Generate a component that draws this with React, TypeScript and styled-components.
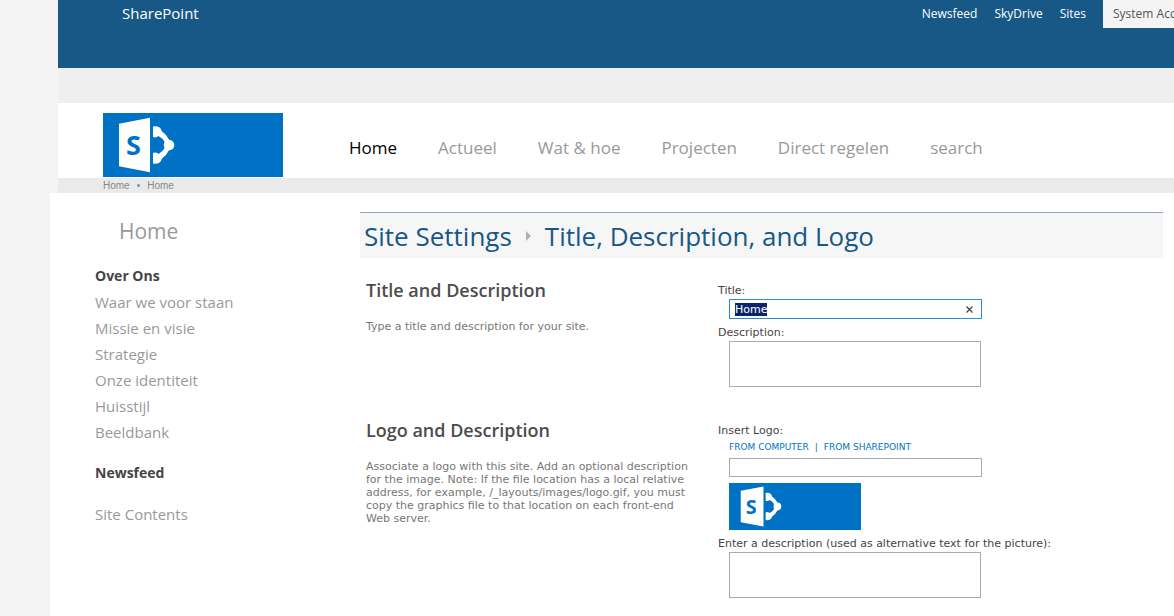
import React, { useEffect, useRef } from "react";
import styled, { createGlobalStyle } from "styled-components";

const human = `"Open Sans", "Noto Sans", sans-serif`;
const verdana = `Verdana, "DejaVu Sans", sans-serif`;

const GlobalStyle = createGlobalStyle`
  * { box-sizing: border-box; }
  body { margin: 0; background: #f4f4f4; font-family: ${human}; color: #999; overflow-x: hidden; }
  h1, h2, p, ul { margin: 0; padding: 0; font-weight: 400; }
  ul { list-style: none; }
  a { color: inherit; text-decoration: none; }
`;

const Header = styled.header`
  margin-left: 58px;
  background: #fff;
`;

const SuiteBar = styled.div`
  display: flex;
  justify-content: space-between;
  align-items: flex-start;
  height: 68px;
  padding-left: 64px;
  background: #185887;
  color: #fff;
`;

const Brand = styled.a`
  font-size: 15px;
  line-height: 26px;
`;

const SuiteNav = styled.nav`
  display: flex;
  gap: 17px;
  font-size: 12px;
  line-height: 28px;
`;

const Account = styled.button`
  width: 71px;
  padding: 0 0 0 10px;
  border: 0;
  background: #f4f4f4;
  color: #555;
  font: inherit;
  text-align: left;
  white-space: nowrap;
  overflow: hidden;
`;

const Ribbon = styled.div`
  height: 35px;
  background: #efefef;
`;

const TopRow = styled.div`
  display: flex;
  gap: 66px;
  height: 75px;
  padding: 10px 0 0 45px;
`;

const MainNav = styled.nav`
  display: flex;
  gap: 41px;
  padding-top: 22px;
  font-size: 17px;
  line-height: 26px;
`;

const NavLink = styled.a<{ $current?: boolean }>`
  color: ${(p) => (p.$current ? "#000" : "#999")};
  white-space: nowrap;
`;

const Crumbs = styled.nav`
  display: flex;
  gap: 7px;
  height: 15px;
  padding-left: 45px;
  background: #eaeaea;
  color: #888;
  font: 10px/15px "Liberation Sans", Arial, sans-serif;
`;

const Body = styled.div`
  display: flex;
  min-height: calc(100vh - 193px);
  margin-left: 50px;
  padding-right: 11px;
  background: #fff;
`;

const Side = styled.aside`
  flex: 0 0 310px;
  padding: 24px 0 0 45px;
`;

const SideTitle = styled.h2`
  padding-left: 24px;
  font-size: 21px;
  line-height: 28px;
`;

const SideList = styled.ul`
  margin-top: 18px;
  line-height: 26px;
`;

const SideItem = styled.li<{ $head?: boolean; $gap?: boolean }>`
  margin-top: ${(p) => (p.$gap ? 15 : 0)}px;
  color: ${(p) => (p.$head ? "#444" : "#999")};
  font-size: ${(p) => (p.$head ? 14 : 15)}px;
  font-weight: ${(p) => (p.$head ? 700 : 400)};
`;

const Main = styled.main`
  flex: 1;
  min-width: 0;
  padding-top: 19px;
`;

const PageTitle = styled.h1`
  display: flex;
  align-items: center;
  gap: 14px;
  height: 46px;
  padding-left: 4px;
  border-top: 1px solid #91aacb;
  background: #f6f6f6;
  color: #185887;
  font-size: 26px;
  white-space: nowrap;
`;

const Section = styled.section`
  display: grid;
  grid-template-columns: 352px 1fr;
  min-height: 140px;
  padding: 18px 0 0 6px;
`;

const SectionTitle = styled.h2`
  color: #4c4c4c;
  font-size: 18px;
  font-weight: 600;
  line-height: 28px;
`;

const Help = styled.p`
  max-width: 326px;
  margin-top: 16px;
  color: #777;
  font: 11px/13px ${verdana};
`;

const Fields = styled.div`
  display: flex;
  flex-direction: column;
  align-items: flex-start;
  padding-top: 8px;
  color: #444;
  font: 11px/14px ${verdana};
`;

const Control = styled.div<{ $tight?: boolean }>`
  position: relative;
  width: 253px;
  margin: 1px 0 ${(p) => (p.$tight ? 5 : 7)}px 11px;
`;

const TextBox = styled.input<{ $short?: boolean }>`
  display: block;
  width: 100%;
  height: ${(p) => (p.$short ? 19 : 20)}px;
  padding: 0 5px;
  border: 1px solid #ababab;
  outline: none;
  color: #444;
  font: 11px/14px ${verdana};
  &:focus { border-color: #2a8dd4; }
  &::selection { background: #0a246a; color: #fff; }
`;

const Clear = styled.button`
  position: absolute;
  right: 6px;
  top: 4px;
  display: flex;
  padding: 3px;
  border: 0;
  background: none;
`;

const Area = styled.textarea`
  display: block;
  width: 252px;
  height: 46px;
  border: 1px solid #ababab;
  resize: none;
  font: 11px/14px ${verdana};
`;

const Sources = styled.div`
  display: flex;
  gap: 6px;
  margin: 2px 0 3px 11px;
  color: #0072c6;
  font: 9px/14px ${verdana};
`;

const LogoSvg = styled.svg`
  display: block;
`;

function SiteLogo({ width, height }: { width: number; height: number }) {
  return (
    <LogoSvg width={width} height={height} viewBox="0 0 180 64" preserveAspectRatio="none" role="img" aria-label="SharePoint">
      <rect width="180" height="64" fill="#0072c6" />
      <path d="M16 10.7 47 4.7V59.3L16 53.3Z" fill="#fff" />
      <text x="23" y="42" fontSize="27" fontWeight="700" fill="#0072c6" fontFamily="Noto Sans">S</text>
      <path
        d="M50 13.500Q57.500 12.500 58.800 18.300Q63.500 21.500 66 26.700A5.300 5.300 0 0 1 66 37.300Q63.500 42.500 58.800 45.700Q57.500 51.500 50 50.500V40Q53 38.800 55.500 41Q59.500 38.800 61.500 35.300Q59.800 32 61.500 28.700Q59.500 25.200 55.500 23Q53 25.200 50 24Z"
        fill="#fff"
      />
    </LogoSvg>
  );
}

const navItems = ["Home", "Actueel", "Wat & hoe", "Projecten", "Direct regelen", "search"];

const sideItems = [
  { text: "Over Ons", head: true },
  { text: "Waar we voor staan" },
  { text: "Missie en visie" },
  { text: "Strategie" },
  { text: "Onze identiteit" },
  { text: "Huisstijl" },
  { text: "Beeldbank" },
  { text: "Newsfeed", head: true, gap: true },
  { text: "Site Contents", gap: true },
];

export default function App() {
  const title = useRef<HTMLInputElement>(null);
  useEffect(() => {
    title.current?.focus();
    title.current?.select();
  }, []);

  return (
    <>
      <GlobalStyle />
      <Header>
        <SuiteBar>
          <Brand href="#">SharePoint</Brand>
          <SuiteNav>
            <a href="#">Newsfeed</a>
            <a href="#">SkyDrive</a>
            <a href="#">Sites</a>
            <Account>System Account</Account>
          </SuiteNav>
        </SuiteBar>
        <Ribbon />
        <TopRow>
          <a href="#"><SiteLogo width={180} height={64} /></a>
          <MainNav>
            {navItems.map((name, i) => (
              <NavLink key={name} href="#" $current={i === 0}>{name}</NavLink>
            ))}
          </MainNav>
        </TopRow>
        <Crumbs>
          <a href="#">Home</a>
          <span>•</span>
          <a href="#">Home</a>
        </Crumbs>
      </Header>
      <Body>
        <Side>
          <SideTitle>Home</SideTitle>
          <SideList>
            {sideItems.map((s) => (
              <SideItem key={s.text} $head={s.head} $gap={s.gap}><a href="#">{s.text}</a></SideItem>
            ))}
          </SideList>
        </Side>
        <Main>
          <PageTitle>
            <a href="#">Site Settings</a>
            <svg width="5" height="10" viewBox="0 0 5 10" aria-hidden="true"><path d="M0 0 5 5 0 10Z" fill="#b0b0b0" /></svg>
            <span>Title, Description, and Logo</span>
          </PageTitle>
          <Section>
            <div>
              <SectionTitle>Title and Description</SectionTitle>
              <Help>Type a title and description for your site.</Help>
            </div>
            <Fields>
              <label htmlFor="title">Title:</label>
              <Control>
                <TextBox id="title" ref={title} defaultValue="Home" />
                <Clear aria-label="Clear">
                  <svg width="7" height="7" viewBox="0 0 7 7"><path d="M.5.5 6.5 6.5M6.5.5.5 6.5" stroke="#444" strokeWidth="1.2" /></svg>
                </Clear>
              </Control>
              <label htmlFor="desc">Description:</label>
              <Control><Area id="desc" /></Control>
            </Fields>
          </Section>
          <Section>
            <div>
              <SectionTitle>Logo and Description</SectionTitle>
              <Help>
                Associate a logo with this site. Add an optional description for the image. Note: If the
                file location has a local relative address, for example, /_layouts/images/logo.gif, you
                must copy the graphics file to that location on each front-end Web server.
              </Help>
            </div>
            <Fields>
              <label htmlFor="logo">Insert Logo:</label>
              <Sources>
                <a href="#">FROM COMPUTER</a>
                <span>|</span>
                <a href="#">FROM SHAREPOINT</a>
              </Sources>
              <Control $tight><TextBox id="logo" $short /></Control>
              <Control><SiteLogo width={132} height={47} /></Control>
              <label htmlFor="alt">Enter a description (used as alternative text for the picture):</label>
              <Control><Area id="alt" /></Control>
            </Fields>
          </Section>
        </Main>
      </Body>
    </>
  );
}
